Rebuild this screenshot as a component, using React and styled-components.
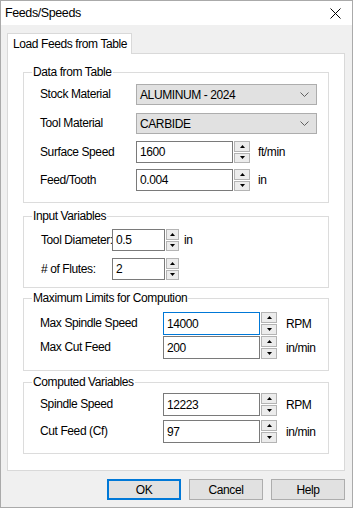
import React from 'react';
import styled, { createGlobalStyle } from 'styled-components';

const FONT = `"Liberation Sans", Arial, sans-serif`;

const Global = createGlobalStyle`
  html, body { margin: 0; padding: 0; background: #f0f0f0; }
  body {
    font-family: ${FONT};
    font-size: 12px;
    letter-spacing: -0.4px;
    color: #000;
    white-space: nowrap;
  }
  * { box-sizing: border-box; }
`;

const Window = styled.div`
  width: 353px;
  height: 508px;
  border: 1px solid #aaaaaa;
  background: #f0f0f0;
  display: flex;
  flex-direction: column;
`;

const TitleBar = styled.div`
  height: 24px;
  background: #fff;
  display: flex;
  align-items: center;
  justify-content: space-between;
  padding: 0 11px 0 4px;
  flex: none;
`;

const Title = styled.span`
  font-size: 12.5px;
  line-height: 16px;
`;

const Body = styled.div`
  padding: 8px 6px 0 6px;
  display: flex;
  flex-direction: column;
`;

const TabStrip = styled.div`
  display: flex;
  height: 20px;
`;

const Tab = styled.div`
  position: relative;
  z-index: 1;
  width: 125px;
  height: 21px;
  background: #fff;
  border: 1px solid #d9d9d9;
  border-bottom: none;
  padding-left: 5px;
  display: flex;
  align-items: center;
`;

const Panel = styled.div`
  width: 338px;
  height: 418px;
  background: #fff;
  border: 1px solid #d9d9d9;
  padding: 18px 15px 0 15px;
  display: flex;
  flex-direction: column;
`;

const Group = styled.div`
  position: relative;
  border: 1px solid #dcdcdc;
  margin-top: ${p => p.$mt}px;
  padding: ${p => p.$pad};
`;

const Legend = styled.span`
  position: absolute;
  top: -8px;
  left: 8px;
  padding: 0 1px;
  background: #fff;
  line-height: 15px;
`;

const Row = styled.div`
  display: flex;
  align-items: center;
  height: ${p => p.$h}px;
  margin-top: ${p => p.$mt || 0}px;
`;

const Label = styled.span`
  width: ${p => p.$w}px;
  flex: none;
  line-height: 15px;
`;

const Combo = styled.div`
  width: 181px;
  height: 100%;
  background: #e1e1e1;
  border: 1px solid #adadad;
  display: flex;
  align-items: center;
  justify-content: space-between;
  padding: 0 7px 0 3px;
`;

const Input = styled.div`
  width: ${p => p.$w}px;
  height: 100%;
  background: #fff;
  border: 1px solid ${p => (p.$focus ? '#0078d7' : '#7a7a7a')};
  display: flex;
  align-items: center;
  padding-left: 3px;
`;

const Spin = styled.div`
  width: ${p => p.$w}px;
  height: 100%;
  margin-left: 1px;
  display: flex;
  flex-direction: column;
  gap: 1px;
  flex: none;
`;

const SpinBtn = styled.div`
  flex: 1;
  background: #ececec;
  border: 1px solid #b4b4b4;
  display: flex;
  align-items: center;
  justify-content: center;
`;

const Unit = styled.span`
  margin-left: ${p => p.$ml}px;
`;

const ButtonBar = styled.div`
  width: 338px;
  margin-top: 8px;
  display: flex;
  justify-content: flex-end;
  gap: 8px;
`;

const Button = styled.div`
  width: 74px;
  height: 21px;
  background: #e1e1e1;
  border: ${p => (p.$default ? '2px solid #0078d7' : '1px solid #adadad')};
  display: flex;
  align-items: center;
  justify-content: center;
`;

const CloseIcon = () => (
  <svg width="11" height="11" viewBox="0 0 11 11">
    <path d="M0.5 0.5 L10.5 10.5 M10.5 0.5 L0.5 10.5" stroke="#000" strokeWidth="1" fill="none" />
  </svg>
);

const Chevron = () => (
  <svg width="9" height="5" viewBox="0 0 9 5">
    <polyline points="0.5,0.5 4.5,4.5 8.5,0.5" stroke="#606060" strokeWidth="1" fill="none" />
  </svg>
);

const Spinner = ({ w }) => (
  <Spin $w={w}>
    <SpinBtn>
      <svg width="5" height="3" viewBox="0 0 5 3"><polygon points="2.5,0 5,3 0,3" fill="#000" /></svg>
    </SpinBtn>
    <SpinBtn>
      <svg width="5" height="3" viewBox="0 0 5 3"><polygon points="0,0 5,0 2.5,3" fill="#000" /></svg>
    </SpinBtn>
  </Spin>
);

const NumField = ({ label, labelW, value, inputW, spinW, unit, unitMl, h, mt, focus }) => (
  <Row $h={h} $mt={mt}>
    <Label $w={labelW}>{label}</Label>
    <Input $w={inputW} $focus={focus}>{value}</Input>
    <Spinner w={spinW} />
    {unit && <Unit $ml={unitMl}>{unit}</Unit>}
  </Row>
);

export default function App() {
  return (
    <>
      <Global />
      <Window>
        <TitleBar>
          <Title>Feeds/Speeds</Title>
          <CloseIcon />
        </TitleBar>
        <Body>
          <TabStrip>
            <Tab>Load Feeds from Table</Tab>
          </TabStrip>
          <Panel>
            <Group $mt={0} $pad="11px 0 11px 16px">
              <Legend>Data from Table</Legend>
              <Row $h={21}>
                <Label $w={96}>Stock Material</Label>
                <Combo>ALUMINUM - 2024<Chevron /></Combo>
              </Row>
              <Row $h={21} $mt={8}>
                <Label $w={96}>Tool Material</Label>
                <Combo>CARBIDE<Chevron /></Combo>
              </Row>
              <NumField label="Surface Speed" labelW={96} value="1600" inputW={97} spinW={16} unit="ft/min" unitMl={8} h={22} mt={7} />
              <NumField label="Feed/Tooth" labelW={96} value="0.004" inputW={97} spinW={16} unit="in" unitMl={8} h={22} mt={6} />
            </Group>

            <Group $mt={13} $pad="12px 0 7px 17px">
              <Legend>Input Variables</Legend>
              <NumField label="Tool Diameter:" labelW={71} value="0.5" inputW={53} spinW={13} unit="in" unitMl={5} h={22} />
              <NumField label="# of Flutes:" labelW={71} value="2" inputW={53} spinW={13} h={22} mt={7} />
            </Group>

            <Group $mt={10} $pad="13px 0 11px 16px">
              <Legend>Maximum Limits for Compution</Legend>
              <NumField label="Max Spindle Speed" labelW={123} value="14000" inputW={97} spinW={16} unit="RPM" unitMl={9} h={23} focus />
              <NumField label="Max Cut Feed" labelW={123} value="200" inputW={97} spinW={16} unit="in/min" unitMl={9} h={23} mt={1} />
            </Group>

            <Group $mt={11} $pad="10px 0 10px 16px">
              <Legend>Computed Variables</Legend>
              <NumField label="Spindle Speed" labelW={123} value="12223" inputW={97} spinW={16} unit="RPM" unitMl={9} h={23} />
              <NumField label="Cut Feed (Cf)" labelW={123} value="97" inputW={97} spinW={16} unit="in/min" unitMl={9} h={23} mt={4} />
            </Group>
          </Panel>
          <ButtonBar>
            <Button $default>OK</Button>
            <Button>Cancel</Button>
            <Button>Help</Button>
          </ButtonBar>
        </Body>
      </Window>
    </>
  );
}
